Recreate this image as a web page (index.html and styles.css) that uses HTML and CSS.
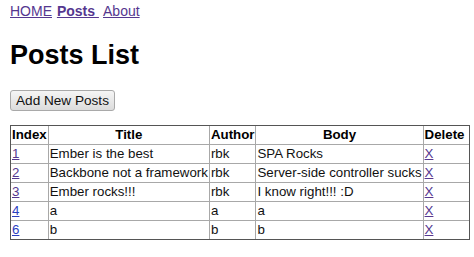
FILE: index.html
```html
<!DOCTYPE html>
<html lang="en">
  <head>
    <meta charset="UTF-8" />
    <title>Posts List</title>
    <link rel="stylesheet" href="styles.css">
  </head>
  <body>
    <div class="nav">
      <a href="#" class="visited">HOME</a>
      <a href="#" class="visited active">Posts </a>
      <a href="#" class="visited">About</a>
    </div>

    <h1>Posts List</h1>

    <button class="add-btn">Add New Posts</button>

    <table class="posts">
      <thead>
        <tr>
          <th>Index</th>
          <th>Title</th>
          <th>Author</th>
          <th>Body</th>
          <th>Delete</th>
        </tr>
      </thead>
      <tbody>
        <tr>
          <td><a href="#" class="visited">1</a></td>
          <td>Ember is the best</td>
          <td>rbk</td>
          <td>SPA Rocks</td>
          <td><a href="#" class="visited">X</a></td>
        </tr>
        <tr>
          <td><a href="#" class="visited">2</a></td>
          <td>Backbone not a framework</td>
          <td>rbk</td>
          <td>Server-side controller sucks</td>
          <td><a href="#" class="visited">X</a></td>
        </tr>
        <tr>
          <td><a href="#" class="visited">3</a></td>
          <td>Ember rocks!!!</td>
          <td>rbk</td>
          <td>I know right!!! :D</td>
          <td><a href="#" class="visited">X</a></td>
        </tr>
        <tr>
          <td><a href="#">4</a></td>
          <td>a</td>
          <td>a</td>
          <td>a</td>
          <td><a href="#" class="visited">X</a></td>
        </tr>
        <tr>
          <td><a href="#">6</a></td>
          <td>b</td>
          <td>b</td>
          <td>b</td>
          <td><a href="#" class="visited">X</a></td>
        </tr>
      </tbody>
    </table>
  </body>
</html>
```

FILE: styles.css
```css
body {
  margin: 3px 4px 3px 10px;
  font-family: "Liberation Sans", Arial, sans-serif;
  font-size: 13.6px;
  color: #111;
  background: #fff;
}
a {
  color: #2b3fbf;
}
a.visited {
  color: #55378f;
}
.nav {
  font-size: 14px;
  line-height: 16px;
}
.nav a {
  margin-right: 1px;
}
.nav .active {
  font-weight: bold;
  white-space: pre;
}
h1 {
  font-size: 27px;
  line-height: 31px;
  margin: 21px 0 19px;
  color: #000;
}
.add-btn {
  display: block;
  height: 21px;
  padding: 0 5px;
  font-family: "Liberation Sans", Arial, sans-serif;
  font-size: 13.6px;
  color: #111;
  background: linear-gradient(#f5f5f5, #dcdcdc);
  border: 1px solid #a9a9a9;
  border-radius: 3px;
}
.posts {
  margin-top: 14px;
  border: 1px solid #555;
  border-spacing: 0;
  font-size: 13.3px;
  line-height: 16px;
}
.posts th,
.posts td {
  padding: 1px;
  border-left: 1px solid #a8a8a8;
  border-top: 1px solid #a8a8a8;
  white-space: nowrap;
}
.posts th {
  border-top: none;
  color: #000;
}
.posts th:first-child,
.posts td:first-child {
  border-left: none;
}
.posts th:last-child {
  padding-right: 5px;
}
.posts td {
  text-align: left;
}
```
